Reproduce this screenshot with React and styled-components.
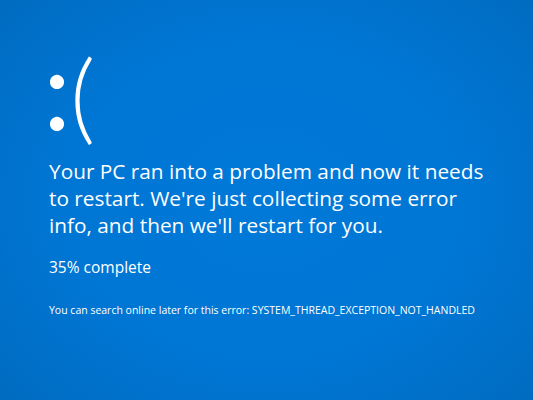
import styled, { createGlobalStyle } from "styled-components"

const GlobalStyle = createGlobalStyle`
    html, body {
        margin: 0;
        padding: 0;
    }
    body {
        width: 533px;
        height: 400px;
        overflow: hidden;
    }
`

const Tela = styled.main`
    width: 533px;
    height: 400px;
    box-sizing: border-box;
    padding: 48px 0 0 49px;
    background: radial-gradient(ellipse 70% 75% at 50% 50%, #0079d8 0%, #0076d4 55%, #006bbf 100%);
    color: #ffffff;
    font-family: "Open Sans", "Noto Sans", sans-serif;
    display: flex;
    flex-direction: column;
`

const Carinha = styled.div`
    display: flex;
    align-items: flex-start;
    height: 104px;
    margin-left: -6px;
    font-family: "Lato", "Open Sans", sans-serif;
    line-height: 1;
`

const Olhos = styled.span`
    font-size: 112px;
    font-weight: 400;
    margin-top: -17px;
    margin-right: -1px;
`

const Boca = styled.span`
    font-size: 98px;
    font-weight: 300;
    margin-top: -3px;
`

const Mensagem = styled.p`
    margin: 6px 0 0;
    font-size: 20.8px;
    font-weight: 400;
    line-height: 27px;
    width: 450px;
`

const Progresso = styled.p`
    margin: 18px 0 0;
    font-size: 15.5px;
    line-height: 20px;
`

const Detalhe = styled.p`
    margin: 27px 0 0;
    font-size: 10.5px;
    line-height: 13px;
`

const App = () => {
    return (
        <>
            <GlobalStyle />
            <Tela>
                <Carinha>
                    <Olhos>:</Olhos>
                    <Boca>(</Boca>
                </Carinha>
                <Mensagem>
                    Your PC ran into a problem and now it needs to restart. We're just collecting some error info, and then we'll restart for you.
                </Mensagem>
                <Progresso>35% complete</Progresso>
                <Detalhe>You can search online later for this error: SYSTEM_THREAD_EXCEPTION_NOT_HANDLED</Detalhe>
            </Tela>
        </>
    )
}

export default App
